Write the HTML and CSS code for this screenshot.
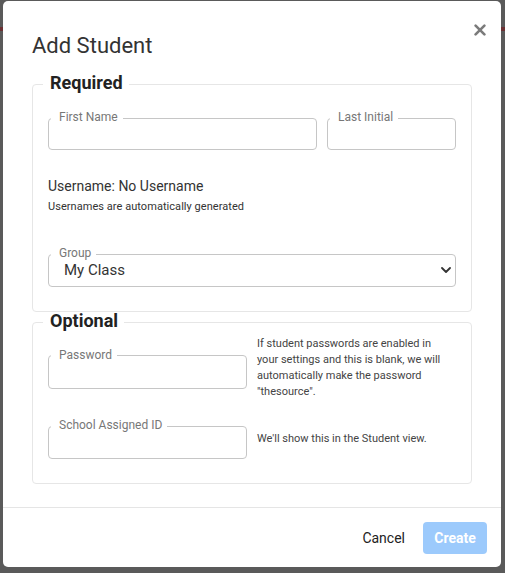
FILE: index.html
```html
<!DOCTYPE html>
<html lang="en">
<head>
<meta charset="utf-8">
<title>Add Student</title>
<link rel="stylesheet" href="styles.css">
</head>
<body>
<div class="modal">
  <div class="modal-header">
    <h2 class="title">Add Student</h2>
    <button class="close" aria-label="Close">
      <svg width="12" height="12" viewBox="0 0 12 12"><path d="M1.6 1.6L10.4 10.4M10.4 1.6L1.6 10.4" stroke="#7b7b7b" stroke-width="2.6" stroke-linecap="round"/></svg>
    </button>
  </div>
  <div class="modal-body">
    <fieldset class="section section-required">
      <legend>Required</legend>
      <div class="name-row">
        <fieldset class="field"><legend>First Name</legend><input class="input" type="text"></fieldset>
        <fieldset class="field"><legend>Last Initial</legend><input class="input" type="text"></fieldset>
      </div>
      <p class="username">Username: No Username</p>
      <p class="username-note">Usernames are automatically generated</p>
      <fieldset class="field field-group">
        <legend>Group</legend>
        <div class="select">
          <span>My Class</span>
          <svg width="10" height="6" viewBox="0 0 10 6"><path d="M1 1l4 4 4-4" fill="none" stroke="#333" stroke-width="1.8" stroke-linecap="round" stroke-linejoin="round"/></svg>
        </div>
      </fieldset>
    </fieldset>
    <fieldset class="section section-optional">
      <legend>Optional</legend>
      <div class="opt-rows">
        <div class="opt-row">
          <fieldset class="field"><legend>Password</legend><input class="input input-tall" type="password"></fieldset>
          <p class="help">If student passwords are enabled in your settings and this is blank, we will automatically make the password "thesource".</p>
        </div>
        <div class="opt-row">
          <fieldset class="field"><legend>School Assigned ID</legend><input class="input input-tall" type="text"></fieldset>
          <p class="help">We'll show this in the Student view.</p>
        </div>
      </div>
    </fieldset>
  </div>
  <div class="modal-footer">
    <button class="btn-cancel">Cancel</button>
    <button class="btn-create" disabled>Create</button>
  </div>
</div>
</body>
</html>
```
FILE: styles.css
```css
* { box-sizing: border-box; }
html, body { margin: 0; height: 100%; }
body {
  background: #5a5a5a linear-gradient(to bottom, transparent 27px, #6b3033 27px, #6b3033 31px, transparent 31px);
  font-family: Roboto, "Liberation Sans", Arial, sans-serif;
  overflow: hidden;
  padding: 1px 0 0 3px;
}
.modal {
  width: 498px;
  background: #fff;
  border-radius: 5px;
  display: flex;
  flex-direction: column;
}
.modal-header {
  display: flex;
  justify-content: space-between;
  align-items: flex-start;
  padding: 23px 15px 0 29px;
}
.title {
  margin: 9px 0 0;
  font-size: 22px;
  line-height: 26px;
  font-weight: 400;
  color: #333;
}
.close {
  border: 0;
  background: none;
  padding: 0;
  width: 12px;
  height: 12px;
  cursor: pointer;
}
.close svg { display: block; }
.modal-body { padding: 14px 29px 23px; }
.section {
  margin: 0;
  border: 1px solid #e6e6e6;
  border-radius: 4px;
  min-width: 0;
}
.section-required { padding: 15px 15px 24px; }
.section-optional { padding: 3px 15px 24px; margin-top: -1px; }
.section > legend {
  margin-left: -5px;
  padding: 0 6px 2px 7px;
  font-size: 18px;
  line-height: 20px;
  font-weight: 700;
  color: #222;
}
.field {
  margin: 0;
  padding: 0;
  border: 1px solid #c6c6c6;
  border-radius: 4px;
  min-width: 0;
}
.field > legend {
  margin-left: 2px;
  padding: 0 5px 2px 8px;
  font-size: 12px;
  line-height: 14px;
  color: #777;
}
.input {
  display: block;
  width: 100%;
  height: 23px;
  border: 0;
  outline: 0;
  padding: 0 14px;
  font: inherit;
  font-size: 15px;
  background: transparent;
}
.input-tall { height: 24px; }
.name-row {
  display: grid;
  grid-template-columns: 269px 129px;
  column-gap: 10px;
}
.username {
  margin: 26px 0 0;
  font-size: 14px;
  line-height: 20px;
  color: #333;
}
.username-note {
  margin: 3px 0 0;
  font-size: 11px;
  line-height: 16px;
  color: #333;
  letter-spacing: 0.05px;
}
.field-group { margin-top: 31px; }
.select {
  display: flex;
  justify-content: space-between;
  align-items: center;
  height: 32px;
  margin-top: -8px;
  padding: 0 4px 0 15px;
  font-size: 15px;
  color: #333;
}
.select svg { display: block; }
.opt-rows {
  display: flex;
  flex-direction: column;
  gap: 18px;
}
.opt-row {
  display: grid;
  grid-template-columns: 199px 190px;
  column-gap: 10px;
  align-items: center;
}
.help {
  margin: 0;
  font-size: 11px;
  line-height: 16px;
  color: #444;
}
.modal-footer {
  border-top: 1px solid #e5e5e5;
  padding: 14px 14px 13px;
  display: flex;
  justify-content: flex-end;
  align-items: center;
  gap: 8px;
}
.btn-cancel {
  background: none;
  border: 0;
  height: 32px;
  padding: 0 10px;
  font-family: inherit;
  font-size: 14px;
  color: #222;
}
.btn-create {
  width: 64px;
  height: 32px;
  border: 0;
  border-radius: 4px;
  background: #9ccafc;
  color: #fff;
  font-family: inherit;
  font-size: 14px;
  font-weight: 700;
  padding: 0;
}
```
